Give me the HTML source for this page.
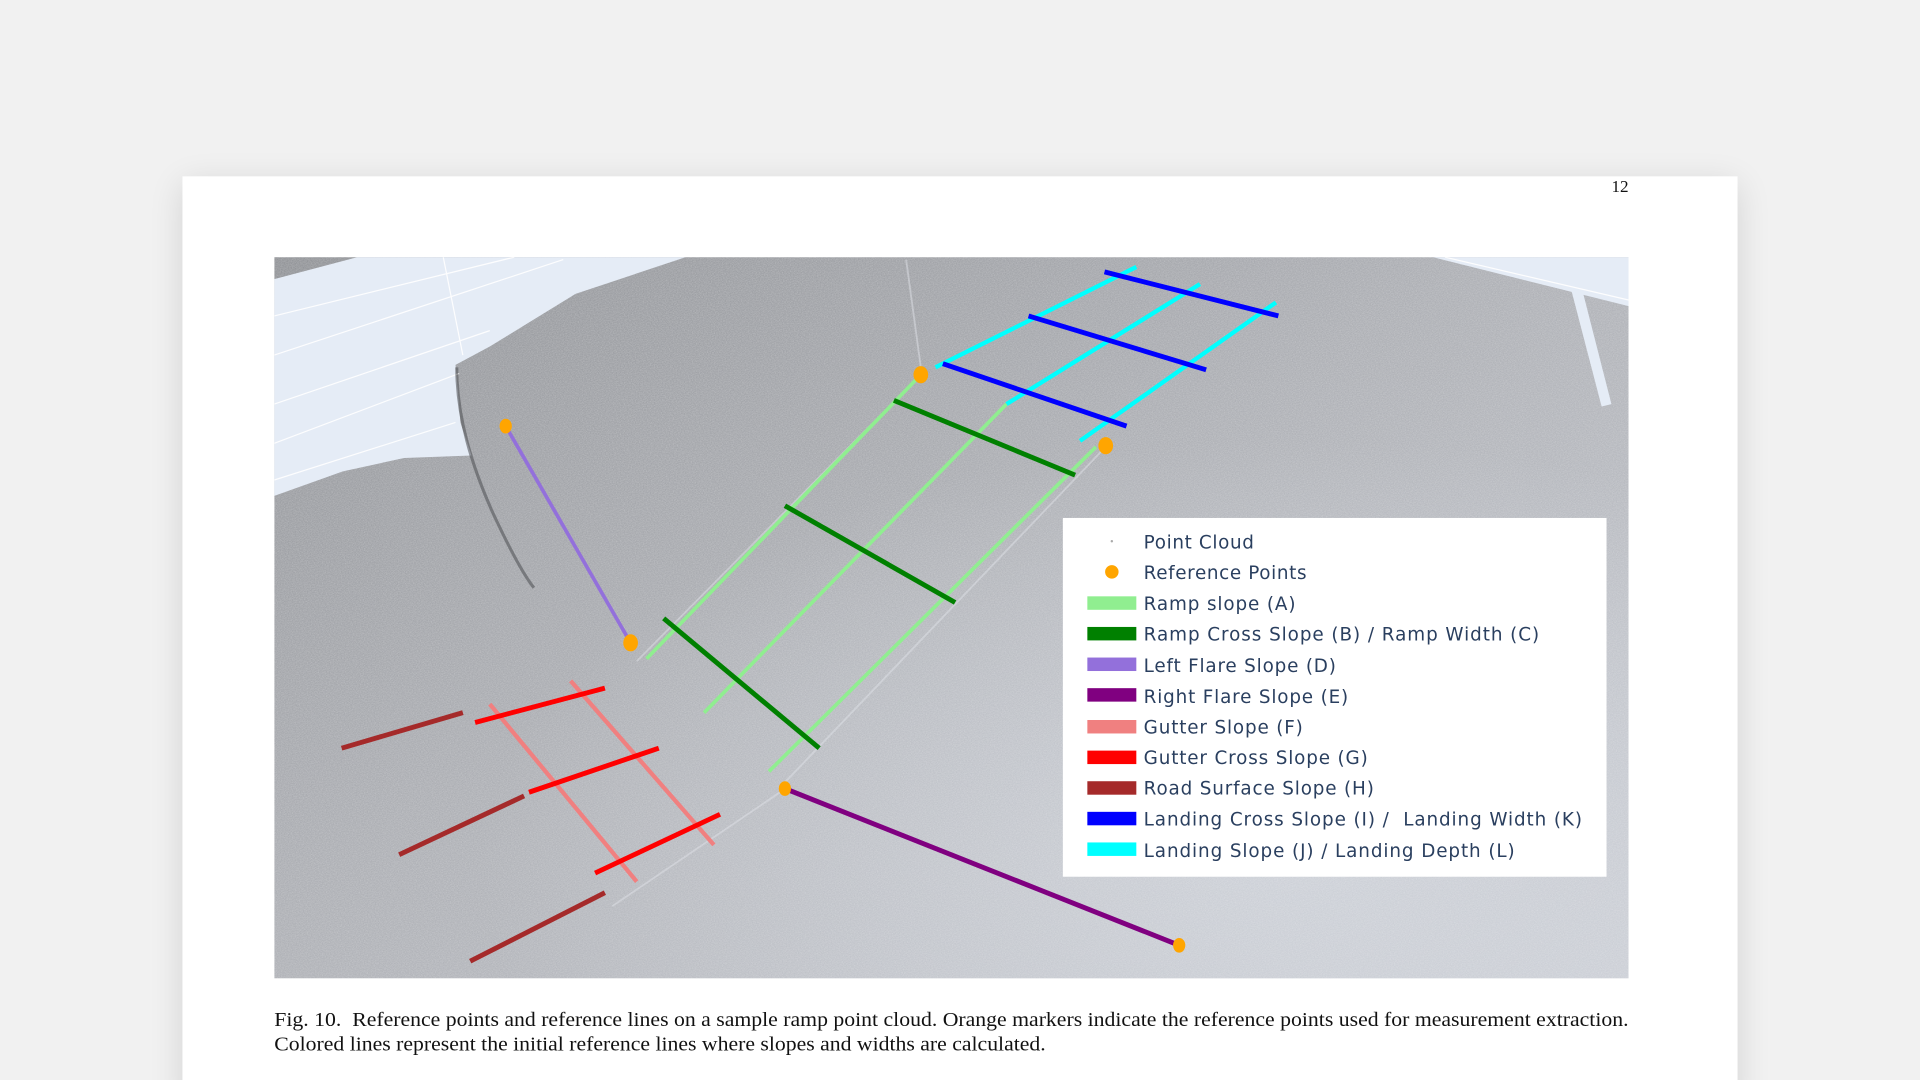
<!DOCTYPE html>
<html><head><meta charset="utf-8"><style>
html,body{margin:0;padding:0;width:1920px;height:1080px;overflow:hidden;background:#f1f1f1;}
svg{display:block}
</style></head><body>
<svg width="1920" height="1080" viewBox="0 0 1568 882" xmlns="http://www.w3.org/2000/svg">
<defs>
<filter id="sh" x="-10%" y="-10%" width="120%" height="130%"><feGaussianBlur stdDeviation="14"/></filter>
<linearGradient id="cg" x1="0" y1="0" x2="1" y2="1">
<stop offset="0" stop-color="#939599"/><stop offset="0.45" stop-color="#aeb0b5"/><stop offset="1" stop-color="#c8cbd2"/>
</linearGradient>
<radialGradient id="lg" cx="0.75" cy="0.85" r="0.6">
<stop offset="0" stop-color="#d4d8df" stop-opacity="0.7"/><stop offset="1" stop-color="#d4d8df" stop-opacity="0"/>
</radialGradient>
<filter id="nz" x="0" y="0" width="100%" height="100%">
<feTurbulence type="fractalNoise" baseFrequency="0.9 1.6" numOctaves="2" seed="3"/>
<feColorMatrix type="matrix" values="0 0 0 0 1  0 0 0 0 1  0 0 0 0 1  0 0 0 1.2 -0.35"/>
</filter>
<clipPath id="fig"><rect x="224" y="210" width="1106" height="589"/></clipPath>
</defs>
<rect x="149" y="150" width="1270" height="760" fill="#000" opacity="0.12" filter="url(#sh)"/>
<rect x="149" y="144" width="1270" height="760" fill="#fff"/>
<text x="1330" y="157" font-family="Liberation Serif, serif" font-size="14" text-anchor="end" fill="#111">12</text>
<g clip-path="url(#fig)">
<rect x="224" y="210" width="1106" height="589" fill="url(#cg)"/>
<rect x="224" y="210" width="1106" height="589" fill="url(#lg)"/>
<rect x="224" y="210" width="1106" height="589" filter="url(#nz)" opacity="0.35"/>
<!-- plot background regions -->
<path d="M224 228 L292 210 L560 210 L470 240 L400 283 L372 298 L376 345 L385 372 L330 374 L280 385 L224 405 Z" fill="#e5ecf6"/>
<path d="M1170 210 L1330 210 L1330 250 Z" fill="#e5ecf6"/>
<path d="M1283 236 L1292 236 L1316 330 L1308 332 Z" fill="#e5ecf6"/>
<g stroke="#fff" stroke-width="1" fill="none" opacity="0.9">
<path d="M224 258 L420 210"/><path d="M224 290 L460 212"/><path d="M224 330 L400 270"/><path d="M224 362 L375 305"/><path d="M224 392 L372 345"/>
<path d="M362 210 L378 290"/><path d="M1180 210 L1330 245"/>
</g>
<!-- cliff shading -->
<path d="M373 300 C373 340 385 380 403 420 C418 452 428 470 436 480" stroke="#4a4c50" stroke-width="2.5" fill="none" opacity="0.55"/>
<!-- subtle ramp edges -->
<g stroke="#dfe2e8" stroke-width="1.5" fill="none" opacity="0.5">
<path d="M740 212 L752 300"/><path d="M752 306 L520 540"/><path d="M900 368 L640 640"/><path d="M640 645 L500 740"/>
</g>
<!-- lines -->
<g stroke-linecap="butt" fill="none">
<g stroke="#90ee90" stroke-width="3"><path d="M752 306 L528 538"/><path d="M822 330 L575 582"/><path d="M895 365 L628 630"/></g>
<g stroke="#00ffff" stroke-width="3.5"><path d="M764 300 L928 218"/><path d="M822 330 L980 232"/><path d="M882 360 L1042 247"/></g>
<g stroke="#0000ff" stroke-width="4"><path d="M902 222 L1044 258"/><path d="M840 258 L985 302"/><path d="M770 297 L920 348"/></g>
<g stroke="#008000" stroke-width="4"><path d="M730 327 L878 388"/><path d="M641 413 L780 492"/><path d="M542 505 L669 611"/></g>
<path d="M413 348 L515 525" stroke="#9370db" stroke-width="3"/>
<path d="M641 644 L963 772" stroke="#800080" stroke-width="4"/>
<g stroke="#f08080" stroke-width="3.5"><path d="M400 575 L520 720"/><path d="M466 556 L583 690"/></g>
<g stroke="#ff0000" stroke-width="4"><path d="M388 590 L494 562"/><path d="M432 647 L538 611"/><path d="M486 713 L588 665"/></g>
<g stroke="#a52a2a" stroke-width="4"><path d="M279 611 L378 582"/><path d="M326 698 L428 650"/><path d="M384 785 L494 729"/></g>
</g>
<g fill="#ffa500"><ellipse cx="413" cy="348" rx="5" ry="6"/><ellipse cx="515" cy="525" rx="6" ry="7"/><ellipse cx="752" cy="306" rx="6" ry="7"/><ellipse cx="903" cy="364" rx="6" ry="7"/><ellipse cx="641" cy="644" rx="5" ry="6"/><ellipse cx="963" cy="772" rx="5" ry="6"/></g>
<!-- legend -->
<rect x="868" y="423" width="444" height="293" fill="#fff"/>
<circle cx="908" cy="442" r="1" fill="#aaa"/>
<circle cx="908" cy="467" r="5.5" fill="#ffa500"/>
<g>
<rect x="888" y="487" width="40" height="11" fill="#90ee90"/>
<rect x="888" y="512" width="40" height="11" fill="#008000"/>
<rect x="888" y="537" width="40" height="11" fill="#9370db"/>
<rect x="888" y="562" width="40" height="11" fill="#800080"/>
<rect x="888" y="588" width="40" height="11" fill="#f08080"/>
<rect x="888" y="613" width="40" height="11" fill="#ff0000"/>
<rect x="888" y="638" width="40" height="11" fill="#a52a2a"/>
<rect x="888" y="663" width="40" height="11" fill="#0000ff"/>
<rect x="888" y="688" width="40" height="11" fill="#00ffff"/>
</g>
<g font-family="DejaVu Sans, Liberation Sans, sans-serif" font-size="15" fill="#2a3f5f">
<text x="934" y="448" textLength="90">Point Cloud</text>
<text x="934" y="473" textLength="133">Reference Points</text>
<text x="934" y="498" textLength="124">Ramp slope (A)</text>
<text x="934" y="523" textLength="323">Ramp Cross Slope (B) / Ramp Width (C)</text>
<text x="934" y="549" textLength="157">Left Flare Slope (D)</text>
<text x="934" y="574" textLength="167">Right Flare Slope (E)</text>
<text x="934" y="599" textLength="130">Gutter Slope (F)</text>
<text x="934" y="624" textLength="183">Gutter Cross Slope (G)</text>
<text x="934" y="649" textLength="188">Road Surface Slope (H)</text>
<text x="934" y="674" textLength="358" xml:space="preserve">Landing Cross Slope (I) /  Landing Width (K)</text>
<text x="934" y="700" textLength="303">Landing Slope (J) / Landing Depth (L)</text>
</g>
</g>
<g font-family="Liberation Serif, serif" font-size="16.5" fill="#111">
<text x="224" y="838" textLength="1106" lengthAdjust="spacingAndGlyphs" xml:space="preserve">Fig. 10.  Reference points and reference lines on a sample ramp point cloud. Orange markers indicate the reference points used for measurement extraction.</text>
<text x="224" y="858" textLength="630" lengthAdjust="spacingAndGlyphs">Colored lines represent the initial reference lines where slopes and widths are calculated.</text>
</g>
</svg>
</body></html>
